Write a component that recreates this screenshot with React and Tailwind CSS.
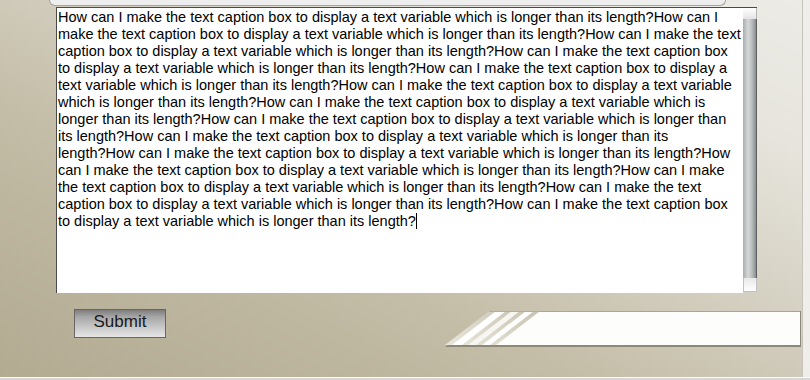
import React from "react";

const SENT = "How can I make the text caption box to display a text variable which is longer than its length?";
const TEXT = Array.from({ length: 14 }, () => SENT).join("\u2060");

function Bar() {
  return (
    <svg width="357" height="37" viewBox="0 0 357 37" className="block">
      <defs>
        <linearGradient id="bandg" x1="0" y1="1" x2="1" y2="0">
          <stop offset="0" stopColor="#e9e6dc" />
          <stop offset="1" stopColor="#c9c3b0" />
        </linearGradient>
      </defs>
      <polygon points="44,1 355,1 355,36 0,36" fill="#8d8979" />
      <polygon points="44,0 96,0 52,34 0,34" fill="url(#bandg)" />
      <polygon points="51,0 61,0 17,34 7,34" fill="#ffffff" />
      <polygon points="67,0 75,0 31,34 23,34" fill="#f7f6f2" />
      <polygon points="81,0 89,0 45,34 37,34" fill="#ffffff" />
      <polygon points="95,0 355,0 355,34 51,34" fill="#fdfdfc" />
      <line x1="92" y1="0.5" x2="355" y2="0.5" stroke="#aaa594" strokeWidth="1" />
      <line x1="44" y1="0.5" x2="96" y2="0.5" stroke="#b3ad99" strokeWidth="1" />
      <line x1="355.5" y1="0" x2="355.5" y2="36" stroke="#8d8979" strokeWidth="1" />
    </svg>
  );
}

export default function App() {
  return (
    <div className="w-[810px] h-[380px] flex flex-col overflow-hidden" style={{ fontFamily: '"Liberation Sans", Arial, sans-serif' }}>
      <div className="flex flex-1 min-h-0">
        <div className="w-[802px] flex flex-col bg-[linear-gradient(to_top_right,#b2aa91_0%,#c3bca6_35%,#d8d4c7_62%,#e6e4dc_80%,#ecebe6_100%)]">
          <div className="ml-[49px] w-[677px] h-[6px] rounded-b-[8px] border-x border-b border-[#a3a3a3] bg-[#eeeeee]" />
          <div className="ml-[56px] mt-[1px] flex h-[286px]">
            <div className="w-[687px] h-full bg-white border-l border-t border-[#4a4a4a] pl-[1px] pt-[1px] text-[14.5px] leading-[17px] text-black break-words overflow-hidden">
              {TEXT}
              <span className="inline-block w-px h-[16px] bg-black align-[-3px]" />
            </div>
            <div className="w-[14px] h-[285px] flex flex-col border-t border-[#4a4a4a]">
              <div className="h-[11px] bg-[linear-gradient(to_bottom,#ffffff,#e4e4e4)] border-r border-[#b5b5b5]" />
              <div className="flex-1 bg-[linear-gradient(to_right,#a9adae,#d6d8d8_40%,#b8bbbc_70%,#8a8d8e)] border-r border-[#5d6060]" />
              <div className="h-[14px] bg-[linear-gradient(to_bottom,#e8e8e8,#ffffff)] border border-t-0 border-[#c2c2c2]" />
            </div>
          </div>
          <div className="flex items-start mt-[16px]">
            <button className="ml-[74px] w-[92px] h-[29px] border border-[#666666] bg-[linear-gradient(to_bottom,#7d7d7d_0%,#a6a6a6_25%,#c9c9c9_65%,#e6e6e6_100%)] text-[17px] leading-[20px] text-[#1a1a1a] pb-[4px]">
              Submit
            </button>
            <div className="ml-[279px] mt-[2px]">
              <Bar />
            </div>
          </div>
        </div>
        <div className="w-[8px] border-l border-[#c6c4bc] bg-[#efeeea]" />
      </div>
      <div className="h-[3px] border-t border-[#fafafa] bg-[#d6d6d6]" />
    </div>
  );
}
